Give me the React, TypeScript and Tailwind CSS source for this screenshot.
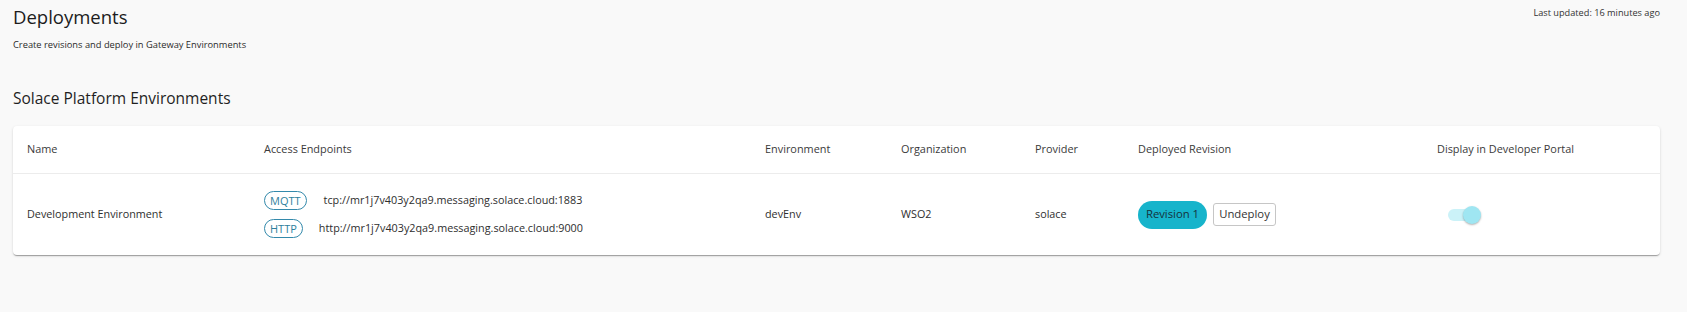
import React from 'react';

const cols = 'grid grid-cols-[237px_501px_136px_134px_103px_299px_1fr]';

function Chip({ label }: { label: string }) {
  return (
    <span className="inline-flex h-[19px] items-center rounded-full border border-[#3389ab] px-[5px] text-[11px] leading-none text-[#2f7f9d]">
      {label}
    </span>
  );
}

function Toggle() {
  return (
    <div className="relative ml-[11px] h-[18px] w-[34px]">
      <div className="absolute left-0 top-[3px] h-[12px] w-[30px] rounded-full bg-[#cbf2f8]" />
      <div className="absolute left-[15px] top-0 h-[18px] w-[18px] rounded-full bg-[#9fe6f2] shadow-[0_1px_2px_rgba(0,0,0,0.3)]" />
    </div>
  );
}

export default function App() {
  return (
    <div
      className="min-h-screen bg-[#f9f9f9] pl-[13px] pr-[27px] pt-[3px] text-[#333]"
      style={{ fontFamily: '"Open Sans", "Noto Sans", sans-serif' }}
    >
      <div className="flex items-start justify-between">
        <div>
          <h1 className="text-[18.5px] leading-[28px] text-[#1c1c1c]">Deployments</h1>
          <p className="mt-[7px] text-[9.3px] leading-[14px] text-[#2a2a2a]">
            Create revisions and deploy in Gateway Environments
          </p>
        </div>
        <span className="mt-[3px] text-[9.2px] leading-[14px] text-[#333]">Last updated: 16 minutes ago</span>
      </div>

      <h2 className="mt-[35px] text-[15.5px] leading-[22px] text-[#1f1f1f]">Solace Platform Environments</h2>

      <div className="mt-[17px] rounded-[4px] bg-white shadow-[0_2px_1px_-1px_rgba(0,0,0,0.2),0_1px_1px_0_rgba(0,0,0,0.14),0_1px_3px_0_rgba(0,0,0,0.12)]">
        <div className={`${cols} h-[48px] items-center border-b border-[#ececec] text-[10.9px] text-[#3a3a3a]`}>
          <div className="pl-[14px]">Name</div>
          <div className="pl-[14px]">Access Endpoints</div>
          <div className="pl-[14px]">Environment</div>
          <div className="pl-[14px]">Organization</div>
          <div className="pl-[14px]">Provider</div>
          <div className="pl-[14px]">Deployed Revision</div>
          <div className="pl-[14px]">Display in Developer Portal</div>
        </div>
        <div className={`${cols} h-[81px] items-center text-[10.8px] text-[#2e2e2e]`}>
          <div className="pl-[14px]">Development Environment</div>
          <div className="flex flex-col gap-[9px] pl-[14px]">
            <div className="flex items-center gap-[17px]">
              <Chip label="MQTT" />
              <span>tcp://mr1j7v403y2qa9.messaging.solace.cloud:1883</span>
            </div>
            <div className="flex items-center gap-[16px]">
              <Chip label="HTTP" />
              <span>http://mr1j7v403y2qa9.messaging.solace.cloud:9000</span>
            </div>
          </div>
          <div className="pl-[14px]">devEnv</div>
          <div className="pl-[14px]">WSO2</div>
          <div className="pl-[14px]">solace</div>
          <div className="flex items-center gap-[6px] pl-[14px]">
            <button className="h-[28px] w-[69px] rounded-full bg-[#17b4cb] text-[11.3px] text-[#15323b]">Revision 1</button>
            <button className="h-[23px] w-[63px] rounded-[3px] border border-[#c6c6c6] bg-white text-[11.3px] text-[#333]">Undeploy</button>
          </div>
          <div className="pl-[14px]">
            <Toggle />
          </div>
        </div>
      </div>
    </div>
  );
}
